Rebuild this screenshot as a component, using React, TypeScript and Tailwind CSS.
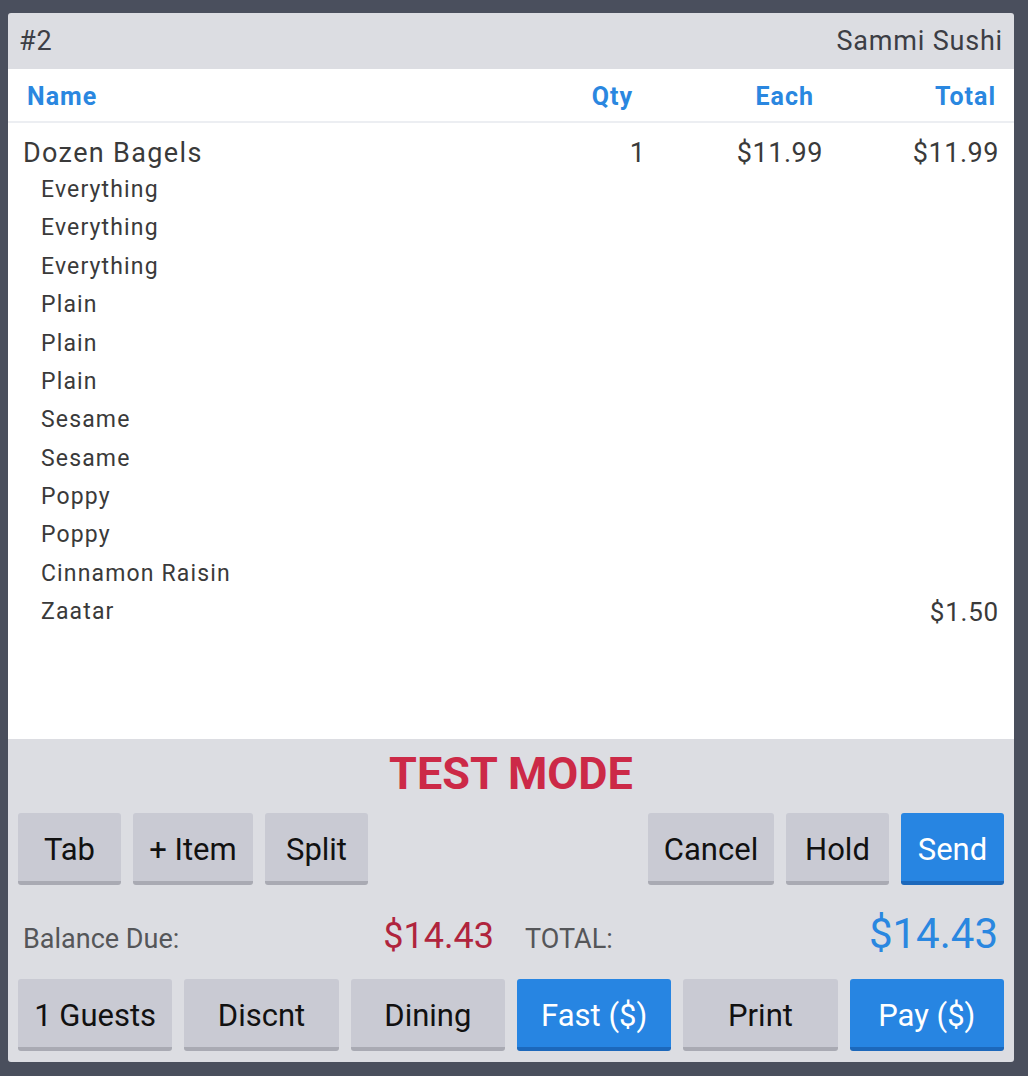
import React from "react"

const modifiers = [
    "Everything",
    "Everything",
    "Everything",
    "Plain",
    "Plain",
    "Plain",
    "Sesame",
    "Sesame",
    "Poppy",
    "Poppy",
    "Cinnamon Raisin",
    "Zaatar",
]

function Btn({ label, w, blue }: { label: string; w: string; blue?: boolean }) {
    return (
        <button
            className={`${w} h-[72px] pt-[7px] rounded-[3px] border-b-[4px] text-[31px] flex items-center justify-center ${
                blue
                    ? "bg-[#2785e2] border-[#1c68bb] text-white"
                    : "bg-[#c9cad3] border-[#a9aab3] text-[#111111]"
            }`}
        >
            {label}
        </button>
    )
}

export default function App() {
    return (
        <div className="w-[1028px] h-[1076px] bg-[#4a4f5d] pt-[13px] pl-[8px] font-['Roboto',sans-serif]">
            <div className="w-[1006px] h-[1049px] rounded-[3px] bg-[#dcdde2] flex flex-col overflow-hidden">
                {/* top bar */}
                <div className="h-[56px] shrink-0 flex items-center justify-between pl-[11px] pr-[11px] text-[27px] tracking-[0.03em] text-[#3c3e45]">
                    <span>#2</span>
                    <span>Sammi Sushi</span>
                </div>

                {/* ticket */}
                <div className="h-[670px] shrink-0 bg-white">
                    <div className="h-[54px] flex items-center pt-[4px] pl-[19px] pr-[18px] border-b-2 border-[#eceef2] text-[25px] font-bold tracking-[0.04em] text-[#2a87e0]">
                        <div className="flex-1">Name</div>
                        <div className="text-right">Qty</div>
                        <div className="w-[181px] text-right">Each</div>
                        <div className="w-[182px] text-right">Total</div>
                    </div>

                    <div className="pt-[12px] pl-[15px] pr-[15px] text-[#3a3a3a]">
                        <div className="h-[36px] flex items-center text-[27px]">
                            <div className="flex-1 tracking-[0.05em]">Dozen Bagels</div>
                            <div className="text-right">1</div>
                            <div className="w-[178px] text-right tracking-[0.02em]">$11.99</div>
                            <div className="w-[176px] text-right tracking-[0.02em]">$11.99</div>
                        </div>
                        {modifiers.map((m, i) => (
                            <div key={i} className="h-[38.4px] flex items-center">
                                <div className="flex-1 pl-[18px] text-[23px] tracking-[0.05em]">{m}</div>
                                {m === "Zaatar" && (
                                    <div className="text-right text-[26px] tracking-[0.03em]">$1.50</div>
                                )}
                            </div>
                        ))}
                    </div>
                </div>

                {/* footer */}
                <div className="flex-1 px-[10px]">
                    <div className="h-[74px] pb-[5px] flex items-center justify-center text-[45px] font-bold text-[#cc2947]">
                        TEST MODE
                    </div>

                    <div className="flex gap-[12px]">
                        <Btn label="Tab" w="w-[103px]" />
                        <Btn label="+ Item" w="w-[120px]" />
                        <Btn label="Split" w="w-[103px]" />
                        <div className="flex-1" />
                        <Btn label="Cancel" w="w-[126px]" />
                        <Btn label="Hold" w="w-[103px]" />
                        <Btn label="Send" w="w-[103px]" blue />
                    </div>

                    <div className="h-[94px] flex items-baseline pt-[28px] leading-none">
                        <div className="w-[358px] pl-[5px] text-[27px] text-[#555659]">Balance Due:</div>
                        <div className="w-[118px] text-right text-[36px] text-[#b0243d]">$14.43</div>
                        <div className="pl-[31px] text-[27px] text-[#555659]">TOTAL:</div>
                        <div className="flex-1 text-right pr-[6px] text-[42px] text-[#2a87e0]">$14.43</div>
                    </div>

                    <div className="grid grid-cols-6 gap-[12px]">
                        <Btn label="1 Guests" w="w-full" />
                        <Btn label="Discnt" w="w-full" />
                        <Btn label="Dining" w="w-full" />
                        <Btn label="Fast ($)" w="w-full" blue />
                        <Btn label="Print" w="w-full" />
                        <Btn label="Pay ($)" w="w-full" blue />
                    </div>
                </div>
            </div>
        </div>
    )
}
